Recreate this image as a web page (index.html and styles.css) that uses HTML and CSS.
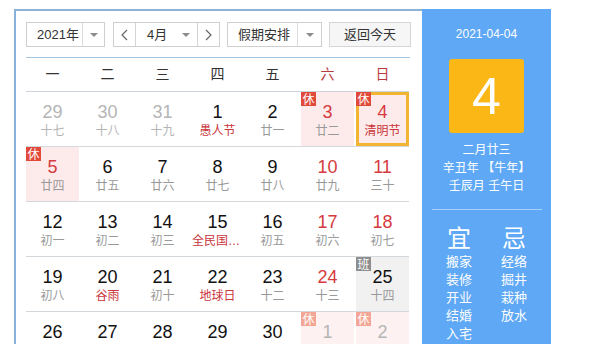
FILE: index.html
```html
<!DOCTYPE html>
<html lang="zh-CN">
<head>
<meta charset="utf-8">
<title>万年历</title>
<link rel="stylesheet" href="styles.css">
</head>
<body>
<div class="cal">
  <div class="main">
    <div class="toolbar">
      <div class="sel sel-year">
        <span class="sel-text">2021年</span>
        <span class="sel-arrow"><i class="tri"></i></span>
      </div>
      <div class="sel sel-month">
        <span class="nav nav-prev"><svg width="7" height="12" viewBox="0 0 7 12"><polyline points="6,1 1,6 6,11" fill="none" stroke="#666" stroke-width="1.2"/></svg></span>
        <span class="sel-text">4月</span>
        <span class="sel-arrow noline"><i class="tri"></i></span>
        <span class="nav nav-next"><svg width="7" height="12" viewBox="0 0 7 12"><polyline points="1,1 6,6 1,11" fill="none" stroke="#666" stroke-width="1.2"/></svg></span>
      </div>
      <div class="sel sel-holiday">
        <span class="sel-text">假期安排</span>
        <span class="sel-arrow wide"><i class="tri"></i></span>
      </div>
      <div class="today-btn">返回今天</div>
    </div>
    <div class="rule"></div>
    <div class="week">
      <span>一</span><span>二</span><span>三</span><span>四</span><span>五</span><span class="we">六</span><span class="we">日</span>
    </div>

    <div class="row">
      <div class="cell other"><div class="num">29</div><div class="lunar">十七</div></div>
      <div class="cell other"><div class="num">30</div><div class="lunar">十八</div></div>
      <div class="cell other"><div class="num">31</div><div class="lunar">十九</div></div>
      <div class="cell"><div class="num">1</div><div class="lunar fest">愚人节</div></div>
      <div class="cell"><div class="num">2</div><div class="lunar">廿一</div></div>
      <div class="cell rest red"><span class="badge">休</span><div class="num">3</div><div class="lunar">廿二</div></div>
      <div class="cell rest red today"><span class="badge">休</span><div class="num">4</div><div class="lunar fest">清明节</div></div>
    </div>

    <div class="row">
      <div class="cell rest red"><span class="badge">休</span><div class="num">5</div><div class="lunar">廿四</div></div>
      <div class="cell"><div class="num">6</div><div class="lunar">廿五</div></div>
      <div class="cell"><div class="num">7</div><div class="lunar">廿六</div></div>
      <div class="cell"><div class="num">8</div><div class="lunar">廿七</div></div>
      <div class="cell"><div class="num">9</div><div class="lunar">廿八</div></div>
      <div class="cell red"><div class="num">10</div><div class="lunar">廿九</div></div>
      <div class="cell red"><div class="num">11</div><div class="lunar">三十</div></div>
    </div>

    <div class="row">
      <div class="cell"><div class="num">12</div><div class="lunar">初一</div></div>
      <div class="cell"><div class="num">13</div><div class="lunar">初二</div></div>
      <div class="cell"><div class="num">14</div><div class="lunar">初三</div></div>
      <div class="cell"><div class="num">15</div><div class="lunar fest">全民国家安全教育日</div></div>
      <div class="cell"><div class="num">16</div><div class="lunar">初五</div></div>
      <div class="cell red"><div class="num">17</div><div class="lunar">初六</div></div>
      <div class="cell red"><div class="num">18</div><div class="lunar">初七</div></div>
    </div>

    <div class="row">
      <div class="cell"><div class="num">19</div><div class="lunar">初八</div></div>
      <div class="cell"><div class="num">20</div><div class="lunar fest">谷雨</div></div>
      <div class="cell"><div class="num">21</div><div class="lunar">初十</div></div>
      <div class="cell"><div class="num">22</div><div class="lunar fest">地球日</div></div>
      <div class="cell"><div class="num">23</div><div class="lunar">十二</div></div>
      <div class="cell red"><div class="num">24</div><div class="lunar">十三</div></div>
      <div class="cell work"><span class="badge ban">班</span><div class="num">25</div><div class="lunar">十四</div></div>
    </div>

    <div class="row">
      <div class="cell"><div class="num">26</div><div class="lunar">十五</div></div>
      <div class="cell"><div class="num">27</div><div class="lunar">十六</div></div>
      <div class="cell"><div class="num">28</div><div class="lunar">十七</div></div>
      <div class="cell"><div class="num">29</div><div class="lunar">十八</div></div>
      <div class="cell"><div class="num">30</div><div class="lunar">十九</div></div>
      <div class="cell other rest"><span class="badge">休</span><div class="num">1</div><div class="lunar">劳动节</div></div>
      <div class="cell other rest"><span class="badge">休</span><div class="num">2</div><div class="lunar">廿一</div></div>
    </div>
  </div>

  <aside class="side">
    <div class="side-date">2021-04-04</div>
    <div class="bigday">4</div>
    <div class="lunar-info">
      <div>二月廿三</div>
      <div>辛丑年 【牛年】</div>
      <div>壬辰月 壬午日</div>
    </div>
    <div class="divider"></div>
    <div class="yiji">
      <div class="col">
        <div class="yj-title">宜</div>
        <div class="items"><div>搬家</div><div>装修</div><div>开业</div><div>结婚</div><div>入宅</div></div>
      </div>
      <div class="col">
        <div class="yj-title">忌</div>
        <div class="items"><div>经络</div><div>掘井</div><div>栽种</div><div>放水</div></div>
      </div>
    </div>
  </aside>
</div>
</body>
</html>
```

FILE: styles.css
```css
* { box-sizing: border-box; margin: 0; padding: 0; }
body {
  margin: 0;
  background: #fff;
  font-family: "Liberation Sans", "Noto Sans CJK SC", sans-serif;
  overflow: hidden;
}
.cal {
  display: flex;
  align-items: flex-start;
  margin: 9px 0 0 14px;
  width: 537px;
}
.main {
  width: 408px;
  height: 340px;
  border-left: 2px solid #86b2dc;
  border-top: 2px solid #8fb2d4;
  padding: 11px 0 0 10px;
}
.toolbar {
  display: flex;
  height: 25px;
}
.sel {
  display: flex;
  align-items: stretch;
  height: 25px;
  border: 1px solid #cfcfcf;
  background: #fff;
  font-size: 13px;
  color: #333;
}
.sel-year { width: 79px; margin-right: 8px; }
.sel-month { width: 107px; margin-right: 7px; }
.sel-holiday { width: 95px; margin-right: 7px; }
.sel-text {
  flex: 1;
  padding-left: 10px;
  line-height: 23px;
  white-space: nowrap;
}
.sel-month .sel-text { padding-left: 11px; }
.sel-arrow {
  width: 22px;
  border-left: 1px solid #dcdcdc;
  display: flex;
  align-items: center;
  justify-content: center;
}
.sel-arrow.noline { border-left: none; }
.sel-arrow.wide { width: 24px; }
.tri {
  width: 0;
  height: 0;
  border-left: 4px solid transparent;
  border-right: 4px solid transparent;
  border-top: 4px solid #8c8c8c;
}
.nav {
  width: 22px;
  display: flex;
  align-items: center;
  justify-content: center;
}
.nav-prev { border-right: 1px solid #d4d4d4; }
.nav-next { border-left: 1px solid #d4d4d4; }
.today-btn {
  width: 82px;
  height: 25px;
  border: 1px solid #d6d6d6;
  background: #f6f6f6;
  font-size: 13px;
  color: #333;
  line-height: 23px;
  text-align: center;
}
.rule {
  margin-top: 10px;
  width: 384px;
  height: 1px;
  background: #a6c5e2;
}
.week, .row {
  display: grid;
  grid-template-columns: repeat(7, 53px);
  column-gap: 2px;
  width: 383px;
}
.week {
  height: 34px;
  line-height: 33px;
  border-bottom: 1px solid #cdd4db;
  font-size: 14px;
  color: #333;
  text-align: center;
}
.week .we { color: #b83a3e; }
.row {
  height: 55px;
  border-bottom: 1px solid #d3d8dd;
}
.cell {
  position: relative;
  height: 54px;
  padding: 11px 1px 0;
  text-align: center;
}
.num {
  font-size: 18px;
  line-height: 19px;
  color: #111;
}
.lunar {
  margin-top: 1px;
  font-size: 12px;
  line-height: 16px;
  color: #999;
  white-space: nowrap;
  overflow: hidden;
  text-overflow: ellipsis;
}
.lunar.fest { color: #c9353b; }
.red .num { color: #d63a40; }
.other .num, .other .lunar { color: #b5b5b5; }
.rest { background: #fdebeb; }
.other.rest { background: #fdf1f1; }
.work { background: #f1f1f1; }
.today { box-shadow: inset 0 0 0 3px #f2b532; }
.badge {
  position: absolute;
  top: 0;
  left: 0;
  width: 15px;
  height: 14px;
  background: #e1493b;
  color: #fff;
  font-size: 12px;
  line-height: 14px;
  text-align: center;
  font-family: "Noto Sans CJK SC", sans-serif;
}
.badge.ban { background: #8e8e8e; }
.other .badge { background: #f3a696; }

.side {
  width: 129px;
  height: 335px;
  background: #5ea8f5;
  color: #fff;
  text-align: center;
  padding-top: 17px;
}
.side-date {
  font-size: 12px;
  line-height: 16px;
}
.bigday {
  width: 75px;
  height: 74px;
  margin: 17px auto 0;
  background: #fbb716;
  border-radius: 3px;
  font-size: 52px;
  line-height: 74px;
}
.lunar-info {
  margin-top: 8px;
  font-size: 12px;
  line-height: 18px;
}
.divider {
  width: 110px;
  height: 1px;
  margin: 14px auto 0;
  background: rgba(255, 255, 255, 0.45);
}
.yiji {
  display: flex;
  justify-content: center;
  gap: 13px;
  margin-top: 13px;
}
.col { width: 42px; }
.yj-title {
  font-size: 24px;
  line-height: 28px;
  font-family: "Noto Sans CJK SC", sans-serif;
}
.items {
  margin-top: 2px;
  font-size: 13px;
  line-height: 18px;
}
```
